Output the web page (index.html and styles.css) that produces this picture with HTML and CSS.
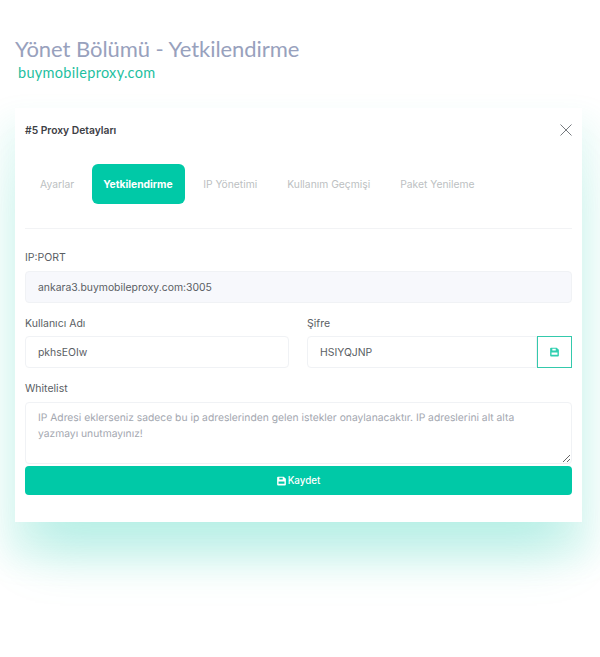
FILE: index.html
```html
<!DOCTYPE html>
<html lang="en">
<head>
    <meta charset="UTF-8">
    <meta name="viewport" content="width=device-width, initial-scale=1.0">
    <title>Yönet Bölümü - Yetkilendirme</title>
    <link rel="stylesheet" href="styles.css">
</head>
<body>
    <div class="page-head">
        <h1>Yönet Bölümü - Yetkilendirme</h1>
        <div class="site-name">buymobileproxy.com</div>
    </div>

    <div class="card">
        <div class="card-head">
            <h2>#5 Proxy Detayları</h2>
            <svg class="close-icon" viewBox="0 0 12 12" aria-label="Kapat">
                <path d="M0.5 0.5L11.5 11.5M11.5 0.5L0.5 11.5"></path>
            </svg>
        </div>

        <ul class="tabs">
            <li>Ayarlar</li>
            <li class="active">Yetkilendirme</li>
            <li>IP Yönetimi</li>
            <li>Kullanım Geçmişi</li>
            <li>Paket Yenileme</li>
        </ul>

        <form class="form">
            <div class="field">
                <label>IP:PORT</label>
                <input class="input readonly" type="text" value="ankara3.buymobileproxy.com:3005" readonly>
            </div>
            <div class="field-row">
                <div class="field">
                    <label>Kullanıcı Adı</label>
                    <input class="input" type="text" value="pkhsEOIw">
                </div>
                <div class="field">
                    <label>Şifre</label>
                    <div class="input-group">
                        <input class="input" type="text" value="HSIYQJNP">
                        <button class="icon-btn" type="button" aria-label="Kaydet">
                            <svg class="save-icon" viewBox="0 0 448 512">
                                <path fill-rule="evenodd" d="M48 32h288l112 112v288a48 48 0 0 1-48 48H48a48 48 0 0 1-48-48V80a48 48 0 0 1 48-48zm64 56v88h176V88H112zM72 276v124h304V276H72z"></path>
                            </svg>
                        </button>
                    </div>
                </div>
            </div>
            <div class="field field-last">
                <label>Whitelist</label>
                <textarea class="input textarea" placeholder="IP Adresi eklerseniz sadece bu ip adreslerinden gelen istekler onaylanacaktır. IP adreslerini alt alta yazmayı unutmayınız!"></textarea>
            </div>
            <button class="submit-btn" type="button">
                <svg class="save-icon" viewBox="0 0 448 512">
                    <path fill-rule="evenodd" d="M48 32h288l112 112v288a48 48 0 0 1-48 48H48a48 48 0 0 1-48-48V80a48 48 0 0 1 48-48zm64 56v88h176V88H112zM72 276v124h304V276H72z"></path>
                </svg>
                Kaydet
            </button>
        </form>
    </div>
</body>
</html>
```

FILE: styles.css
```css
* {
    box-sizing: border-box;
}

body {
    margin: 0;
    height: 657px;
    overflow: hidden;
    background-color: #ffffff;
    font-family: Inter, "Liberation Sans", sans-serif;
    color: #4a4f57;
}

.page-head {
    padding: 37px 15px 0;
}

.page-head h1 {
    margin: 0;
    font-family: Lato, sans-serif;
    font-size: 22px;
    line-height: 24px;
    font-weight: 400;
    letter-spacing: -0.05px;
    color: #98a1bd;
}

.site-name {
    margin: 3px 0 0 3px;
    font-family: Lato, sans-serif;
    font-size: 14.5px;
    line-height: 18px;
    letter-spacing: 0.3px;
    color: #1fbf9f;
}

.card {
    width: 567px;
    height: 414px;
    margin: 26px 0 0 15px;
    padding: 0 10px;
    background-color: #ffffff;
    box-shadow: 0 45px 50px -15px rgba(0, 201, 167, 0.22),
                0 25px 30px 13px rgba(0, 201, 167, 0.09);
}

.card-head {
    display: flex;
    justify-content: space-between;
    align-items: center;
    height: 44px;
}

.card-head h2 {
    margin: 0;
    font-size: 10.3px;
    font-weight: 600;
    color: #3d4045;
}

.close-icon {
    width: 12px;
    height: 12px;
    fill: none;
    stroke: #777b80;
    stroke-width: 1;
}

.tabs {
    display: flex;
    align-items: center;
    margin: 12px 0 0;
    padding: 0 0 24px;
    list-style-type: none;
    border-bottom: 1px solid #f2f3f5;
}

.tabs li {
    padding: 0 15px;
    height: 40px;
    line-height: 40px;
    font-size: 10.3px;
    color: #bcbfc2;
    border-radius: 6px;
}

.tabs li.active {
    padding: 0 12.5px 0 11px;
    margin: 0 3px;
    font-weight: 700;
    color: #ffffff;
    background-color: #00c9a7;
}

.form {
    padding-top: 22px;
}

.field {
    margin-bottom: 13px;
}

.field label {
    display: block;
    margin-bottom: 6px;
    font-size: 10.5px;
    line-height: 14px;
    color: #5a5e64;
}

.field-row {
    display: grid;
    grid-template-columns: 264px 1fr;
    gap: 18px;
    padding-top: 1px;
}

.field-row .field label {
    margin-bottom: 5px;
}

.input {
    display: block;
    width: 100%;
    height: 32px;
    padding: 0 12px;
    font-family: inherit;
    font-size: 10.4px;
    color: #5a5e64;
    background-color: #ffffff;
    border: 1px solid #f0f2f5;
    border-radius: 4px;
    outline: none;
}

.readonly {
    background-color: #f7f8fc;
}

.input-group {
    display: flex;
}

.input-group .input {
    border-radius: 4px 0 0 4px;
}

.icon-btn {
    flex: none;
    display: flex;
    justify-content: center;
    align-items: center;
    width: 35px;
    height: 32px;
    padding: 0;
    background-color: #ffffff;
    border: 1px solid #34c9ac;
}

.icon-btn .save-icon {
    fill: #2fcfb0;
}

.save-icon {
    width: 9px;
    height: 10px;
}

.field-last {
    padding-top: 1px;
    margin-bottom: 2px;
}

.textarea {
    height: 62px;
    padding: 7px 31px 7px 12px;
    font-size: 10.3px;
    text-rendering: geometricPrecision;
    line-height: 16px;
    resize: vertical;
}

.textarea::placeholder {
    color: #a3a7b0;
    opacity: 1;
}

.submit-btn {
    display: flex;
    justify-content: center;
    align-items: center;
    gap: 2px;
    width: 100%;
    height: 29px;
    padding: 0;
    font-family: inherit;
    font-size: 9.8px;
    font-weight: 500;
    color: #ffffff;
    background-color: #00c9a7;
    border: none;
    border-radius: 4px;
}

.submit-btn .save-icon {
    fill: #ffffff;
}
```
